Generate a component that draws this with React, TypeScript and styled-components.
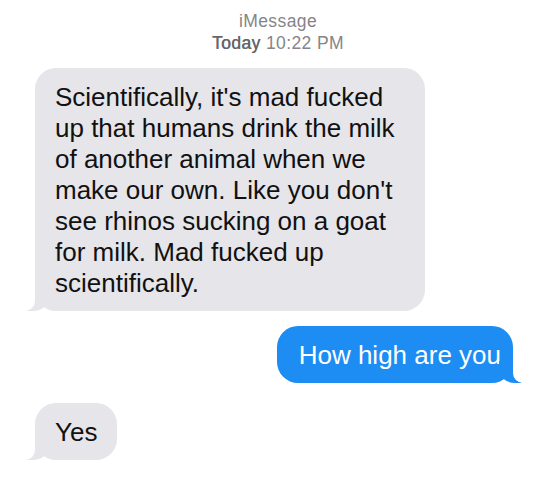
import React from "react";
import styled, { createGlobalStyle } from "styled-components";

type Side = "in" | "out";

interface Message {
  id: number;
  side: Side;
  text: string;
  space: number;
}

const GlobalStyle = createGlobalStyle`
  html, body {
    margin: 0;
    padding: 0;
    background: #ffffff;
  }
  body {
    font-family: "Liberation Sans", Arial, Helvetica, sans-serif;
    -webkit-font-smoothing: antialiased;
  }
`;

export const Screen = styled.div`
  width: 550px;
  min-height: 481px;
  display: flex;
  flex-direction: column;
  padding-top: 10px;
  box-sizing: border-box;
  background: #ffffff;
`;

export const Header = styled.div`
  display: flex;
  flex-direction: column;
  align-items: center;
  color: #858589;
  font-size: 17.5px;
  letter-spacing: 0.4px;
  line-height: 22px;
  padding-left: 6px;
`;

export const Service = styled.div``;

export const Stamp = styled.div``;

export const Day = styled.span`
  color: #66666b;
  text-shadow: 0.3px 0 0 #66666b;
`;

export const Thread = styled.div`
  display: flex;
  flex-direction: column;
  padding: 0 37px 0 35px;
  margin-top: 14px;
`;

export const Row = styled.div<{ $side: Side; $space: number }>`
  display: flex;
  justify-content: ${(p) => (p.$side === "in" ? "flex-start" : "flex-end")};
  margin-top: ${(p) => p.$space}px;
`;

export const Bubble = styled.div<{ $side: Side }>`
  position: relative;
  box-sizing: border-box;
  max-width: 390px;
  padding: ${(p) => (p.$side === "in" ? "14px 20px 12px 20px" : "14px 12px 12px 22px")};
  border-radius: 21px;
  font-size: 26px;
  line-height: 31px;
  background: ${(p) => (p.$side === "in" ? "#e5e5ea" : "#1d8df3")};
  color: ${(p) => (p.$side === "in" ? "#111111" : "#ffffff")};

  &::before {
    content: "";
    position: absolute;
    bottom: 0;
    ${(p) => (p.$side === "in" ? "left: -8px;" : "right: -8px;")}
    width: 22px;
    height: 22px;
    background: ${(p) => (p.$side === "in" ? "#e5e5ea" : "#1d8df3")};
    ${(p) =>
      p.$side === "in"
        ? "border-bottom-right-radius: 16px 14px;"
        : "border-bottom-left-radius: 16px 14px;"}
  }

  &::after {
    content: "";
    position: absolute;
    bottom: 0;
    ${(p) => (p.$side === "in" ? "left: -10px;" : "right: -10px;")}
    width: 10px;
    height: 22px;
    background: #ffffff;
    ${(p) =>
      p.$side === "in"
        ? "border-bottom-right-radius: 10px;"
        : "border-bottom-left-radius: 10px;"}
  }
`;

const messages: Message[] = [
  {
    id: 1,
    side: "in",
    text: "Scientifically, it's mad fucked up that humans drink the milk of another animal when we make our own. Like you don't see rhinos sucking on a goat for milk. Mad fucked up scientifically.",
    space: 0,
  },
  { id: 2, side: "out", text: "How high are you", space: 15 },
  { id: 3, side: "in", text: "Yes", space: 20 },
];

const App: React.FC = () => {
  return (
    <Screen>
      <GlobalStyle />
      <Header>
        <Service>iMessage</Service>
        <Stamp>
          <Day>Today</Day> 10:22 PM
        </Stamp>
      </Header>
      <Thread>
        {messages.map((m) => (
          <Row key={m.id} $side={m.side} $space={m.space}>
            <Bubble $side={m.side}>{m.text}</Bubble>
          </Row>
        ))}
      </Thread>
    </Screen>
  );
};

export default App;
